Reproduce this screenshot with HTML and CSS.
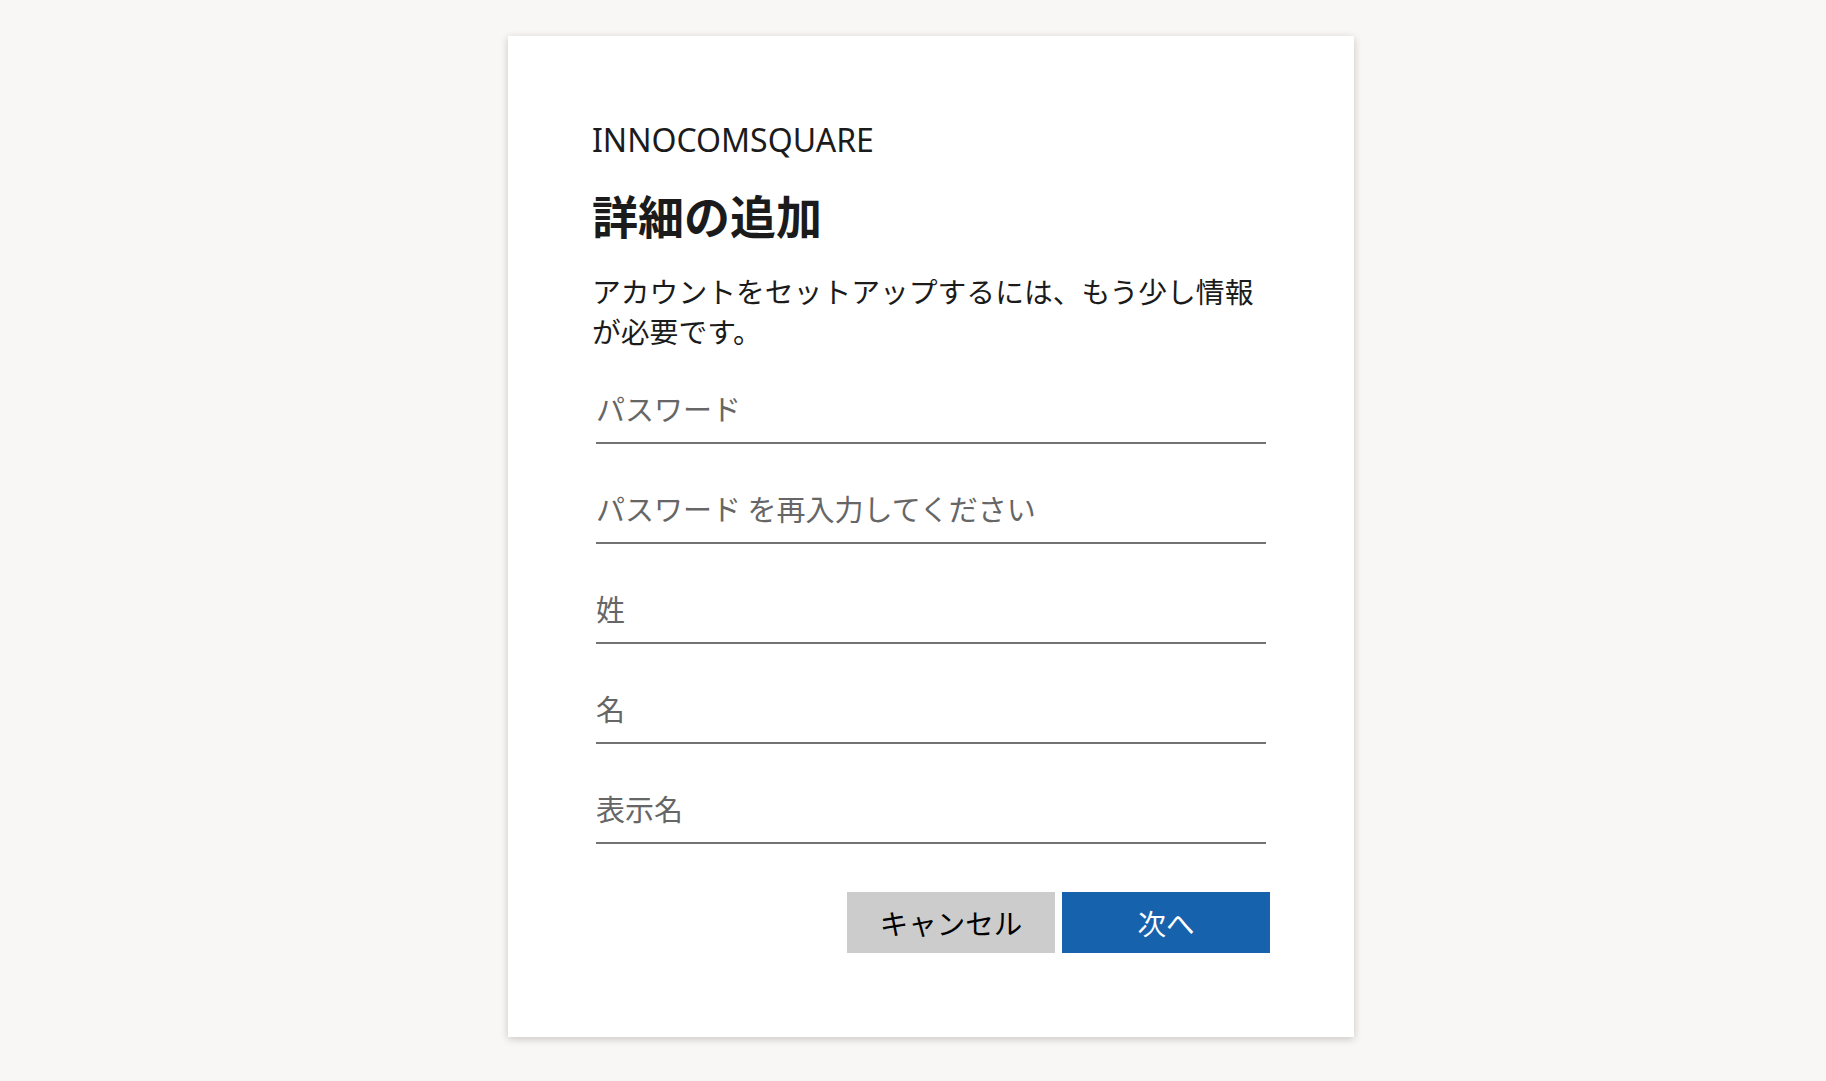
FILE: index.html
```html
<!DOCTYPE html>
<html lang="ja">
<head>
<meta charset="utf-8">
<title>詳細の追加</title>
<link rel="stylesheet" href="styles.css">
</head>
<body>
<main class="card">
  <div class="brand">INNOCOMSQUARE</div>
  <h1 class="title">詳細の追加</h1>
  <p class="intro">アカウントをセットアップするには、もう少し情報が必要です。</p>
  <form class="fields">
    <input class="field" type="password" placeholder="パスワード">
    <input class="field" type="password" placeholder="パスワード を再入力してください">
    <input class="field" type="text" placeholder="姓">
    <input class="field" type="text" placeholder="名">
    <input class="field" type="text" placeholder="表示名">
    <div class="actions">
      <button type="button" class="btn btn-cancel">キャンセル</button>
      <button type="button" class="btn btn-next">次へ</button>
    </div>
  </form>
</main>
</body>
</html>
```

FILE: styles.css
```css
html, body {
  margin: 0;
  padding: 0;
}

body {
  box-sizing: border-box;
  background: #f8f7f5;
  min-height: 1081px;
  padding: 36px 0 0 36px;
  font-family: "Noto Sans", "Noto Sans CJK JP", sans-serif;
  color: #1b1b1b;
}

.card {
  box-sizing: border-box;
  width: 846px;
  margin: 0 auto;
  padding: 84px 84px 84px 84px;
  background: #ffffff;
  box-shadow: 0 2px 8px rgba(0, 0, 0, 0.2);
  display: flex;
  flex-direction: column;
}

.brand {
  font-family: "Noto Sans", sans-serif;
  font-size: 32px;
  line-height: 40px;
  color: #1b1b1b;
}

.title {
  margin: 26px 0 0;
  font-family: "Noto Sans CJK JP", sans-serif;
  font-weight: 700;
  font-size: 46px;
  line-height: 56px;
  color: #1b1b1b;
}

.intro {
  margin: 29px 0 0;
  font-family: "Noto Sans CJK JP", sans-serif;
  font-size: 28.8px;
  line-height: 40px;
  color: #1b1b1b;
}

.fields {
  margin: 23px 0 0;
  display: flex;
  flex-direction: column;
  gap: 30px;
}

.field {
  box-sizing: border-box;
  display: block;
  width: 670px;
  height: 70px;
  margin: 0 0 0 4px;
  padding: 0;
  border: none;
  border-bottom: 2px solid #737373;
  background: transparent;
  font-family: "Noto Sans CJK JP", sans-serif;
  font-size: 29px;
  color: #1b1b1b;
  outline: none;
}

.field::placeholder {
  color: #666666;
  opacity: 1;
}

.actions {
  margin-top: 18px;
  display: flex;
  justify-content: flex-end;
  gap: 7px;
}

.btn {
  box-sizing: border-box;
  width: 208px;
  height: 61px;
  border: none;
  padding: 0;
  font-family: "Noto Sans CJK JP", sans-serif;
  font-size: 28.5px;
  line-height: 61px;
}

.btn-cancel {
  background: #cccccc;
  color: #000000;
}

.btn-next {
  background: #1762ad;
  color: #ffffff;
}
```
